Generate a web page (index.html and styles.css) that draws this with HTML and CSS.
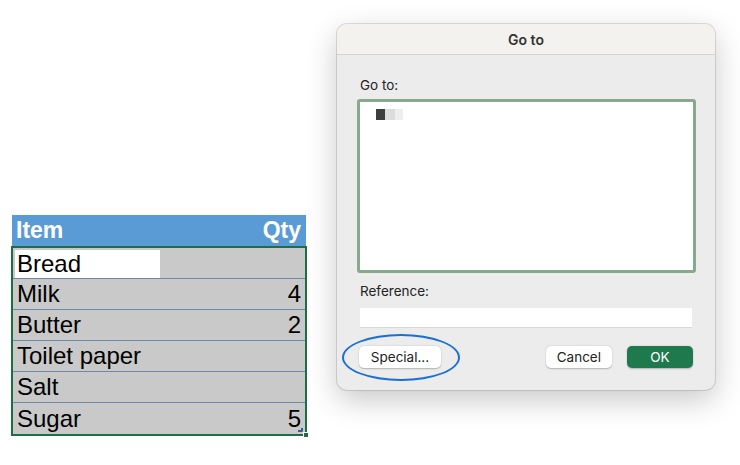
FILE: index.html
```html
<html>
<head>
    <meta charset="UTF-8">
    <meta name="viewport" content="width=device-width, initial-scale=1.0">
    <title>Go to</title>
    <link rel="stylesheet" href="styles.css">
</head>
<body>

<div class="page">
    <div class="sheet">
        <div class="head">
            <span>Item</span>
            <span>Qty</span>
        </div>
        <div class="cells">
            <div class="row first">
                <div class="active">Bread</div>
                <div class="qty"></div>
            </div>
            <div class="row"><div class="name">Milk</div><div class="qty">4</div></div>
            <div class="row"><div class="name">Butter</div><div class="qty">2</div></div>
            <div class="row"><div class="name">Toilet paper</div><div class="qty"></div></div>
            <div class="row"><div class="name">Salt</div><div class="qty"></div></div>
            <div class="row last"><div class="name">Sugar</div><div class="qty">5</div></div>
            <div class="handle"></div>
            <div class="fill-mark"></div>
        </div>
    </div>

    <div class="dialog">
        <div class="title">Go to</div>
        <div class="content">
            <div class="label">Go to:</div>
            <div class="list">
                <div class="blur">
                    <span class="px dark"></span>
                    <span class="px mid"></span>
                    <span class="px light"></span>
                </div>
            </div>
            <div class="label ref">Reference:</div>
            <div class="field"></div>
            <div class="buttons">
                <div class="special-wrap">
                    <button class="btn">Special...</button>
                    <div class="circle"></div>
                </div>
                <div class="right">
                    <button class="btn">Cancel</button>
                    <button class="btn ok">OK</button>
                </div>
            </div>
        </div>
    </div>
</div>

</body>
</html>
```

FILE: styles.css
```css
* {
    margin: 0;
    padding: 0;
    box-sizing: border-box;
}
body {
    background: #ffffff;
    font-family: "Liberation Sans", Arial, sans-serif;
}
.page {
    display: flex;
    align-items: flex-start;
    padding: 24px 0 0 12px;
    gap: 31px;
}
.sheet {
    width: 294px;
    margin-top: 191px;
}
.head {
    height: 31px;
    background: #5b9bd5;
    color: #ffffff;
    font-weight: bold;
    font-size: 23px;
    display: flex;
    justify-content: space-between;
    align-items: center;
    padding: 0 5px 0 4px;
}
.cells {
    position: relative;
    border: 2px solid #1f6d45;
    margin-left: -1px;
    margin-right: -1px;
}
.row {
    display: flex;
    height: 31px;
    background: #c9c9c9;
    border-bottom: 1px solid #6c8aa8;
    font-size: 24px;
    color: #000000;
    align-items: center;
}
.row.last {
    border-bottom: none;
    height: 31px;
}
.row .name,
.row .active {
    padding-left: 4px;
    flex: 1;
}
.row .active {
    flex: none;
    width: 145px;
    height: 100%;
    background: #ffffff;
    display: flex;
    align-items: center;
}
.row.first {
    padding: 2px 2px 0 2px;
}
.row.first .active {
    padding-left: 2px;
}
.row .qty {
    flex: 1;
    text-align: right;
    padding-right: 4px;
}
.handle {
    position: absolute;
    right: -4px;
    bottom: -4px;
    width: 6px;
    height: 6px;
    background: #1f6d45;
    border: 1px solid #ffffff;
}
.fill-mark {
    position: absolute;
    right: 2px;
    bottom: 2px;
    width: 5px;
    height: 4px;
    border-bottom: 2px solid #3b5a9a;
    border-right: 2px solid #3b5a9a;
    border-radius: 0 0 2px 0;
}

.dialog {
    width: 378px;
    background: #ececec;
    border-radius: 10px;
    box-shadow: 0 0 0 1px rgba(0, 0, 0, 0.12), 0 10px 30px rgba(0, 0, 0, 0.22);
    font-family: Inter, "Liberation Sans", sans-serif;
    font-size: 13.5px;
    color: #222222;
}
.title {
    height: 31px;
    background: #f3f2ef;
    border-bottom: 1px solid #d2d2d2;
    border-radius: 10px 10px 0 0;
    text-align: center;
    line-height: 31px;
    font-weight: 600;
    font-size: 14px;
    color: #333333;
}
.content {
    padding: 22px 19px 22px 20px;
}
.label {
    line-height: 16px;
    padding-left: 3px;
    margin-bottom: 6px;
}
.list {
    height: 174px;
    background: #ffffff;
    border: 3px solid #88a98b;
    border-radius: 3px;
    padding: 7px 0 0 16px;
}
.blur {
    display: flex;
    opacity: 0.9;
}
.px {
    display: inline-block;
    width: 9px;
    height: 11px;
}
.px.dark { background: #2a2a2a; }
.px.mid { background: #d9d9d9; width: 10px; }
.px.light { background: #ededed; width: 8px; }
.label.ref {
    margin-top: 10px;
    margin-bottom: 9px;
}
.field {
    height: 20px;
    margin: 0 4px 0 3px;
    background: #ffffff;
    border-bottom: 1px solid #d8d8d8;
}
.buttons {
    display: flex;
    justify-content: space-between;
    align-items: center;
    margin-top: 18px;
    padding: 0 3px 0 2px;
}
.right {
    display: flex;
    gap: 15px;
}
.btn {
    height: 22px;
    min-width: 66px;
    padding: 0 11px;
    background: #ffffff;
    border: none;
    border-radius: 5px;
    box-shadow: 0 0.5px 1.5px rgba(0, 0, 0, 0.25);
    font-family: Inter, "Liberation Sans", sans-serif;
    font-size: 13.5px;
    color: #222222;
}
.btn.ok {
    background: #1e7a4c;
    color: #ffffff;
}
.special-wrap {
    position: relative;
}
.special-wrap .btn {
    width: 82px;
}
.circle {
    position: absolute;
    left: -17px;
    top: -12px;
    width: 118px;
    height: 47px;
    border: 2.5px solid #1a6fd6;
    border-radius: 50%;
}
```
